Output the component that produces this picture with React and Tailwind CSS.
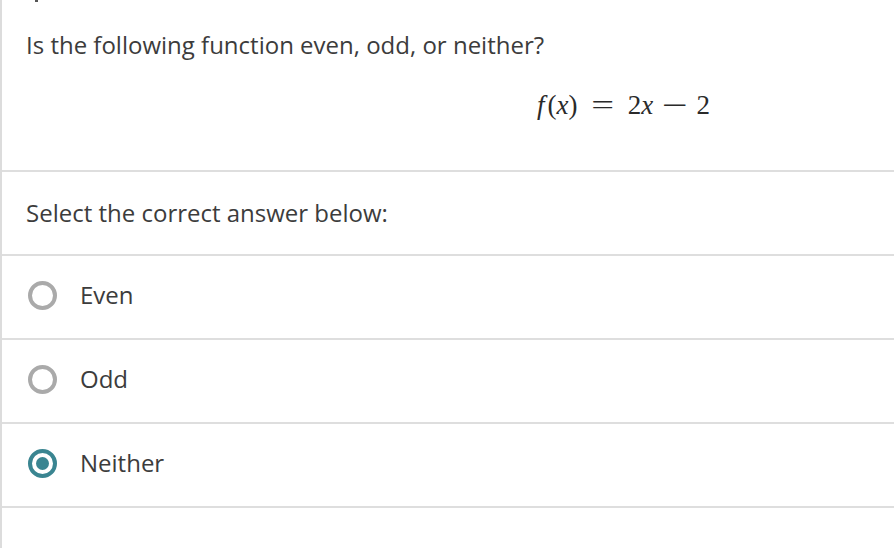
export default function App() {
  const font = { fontFamily: '"Open Sans", "Liberation Sans", sans-serif' };
  const Row = ({ children }) => (
    <div className="h-[84px] border-t-2 border-[#dedede] flex items-center pl-[26px] pb-[4px]">{children}</div>
  );
  const Radio = ({ checked }) =>
    checked ? (
      <span className="w-[29px] h-[29px] rounded-full border-4 border-[#3a8591] flex items-center justify-center shrink-0">
        <span className="w-[13px] h-[13px] rounded-full bg-[#3a8591]" />
      </span>
    ) : (
      <span className="w-[29px] h-[29px] rounded-full border-4 border-[#aaaaaa] shrink-0" />
    );
  return (
    <div className="relative w-[894px] h-[548px] bg-white overflow-hidden border-l-2 border-[#dcdcdc] text-[#3c3c3c] text-[24px]" style={font}>
      <span className="absolute left-[33px] top-0 w-[3px] h-[2px] bg-[#555]" />
      <div className="h-[170px] pt-[31px]">
        <p className="pl-[24px] leading-[28px]">Is the following function even, odd, or neither?</p>
        <div className="mt-[30px] pl-[535px] flex items-baseline text-[27px] text-[#2a2a2a] leading-[32px]" style={{ fontFamily: '"Liberation Serif", serif' }}>
          <span className="italic">f</span>
          <span className="ml-[3px]">(</span>
          <span className="italic">x</span>
          <span>)</span>
          <span className="ml-[17px] scale-x-[1.5] inline-block">=</span>
          <span className="ml-[18px]">2</span>
          <span className="italic">x</span>
          <span className="ml-[14px] scale-x-[1.7] inline-block">−</span>
          <span className="ml-[14px]">2</span>
        </div>
      </div>
      <div className="h-[84px] border-t-2 border-[#dedede] flex items-center pl-[24px]">
        <span className="leading-[28px]">Select the correct answer below:</span>
      </div>
      <Row>
        <Radio />
        <span className="ml-[23px] leading-[28px]">Even</span>
      </Row>
      <Row>
        <Radio />
        <span className="ml-[23px] leading-[28px]">Odd</span>
      </Row>
      <Row>
        <Radio checked />
        <span className="ml-[23px] leading-[28px]">Neither</span>
      </Row>
      <div className="border-t-2 border-[#dedede]" />
    </div>
  );
}
